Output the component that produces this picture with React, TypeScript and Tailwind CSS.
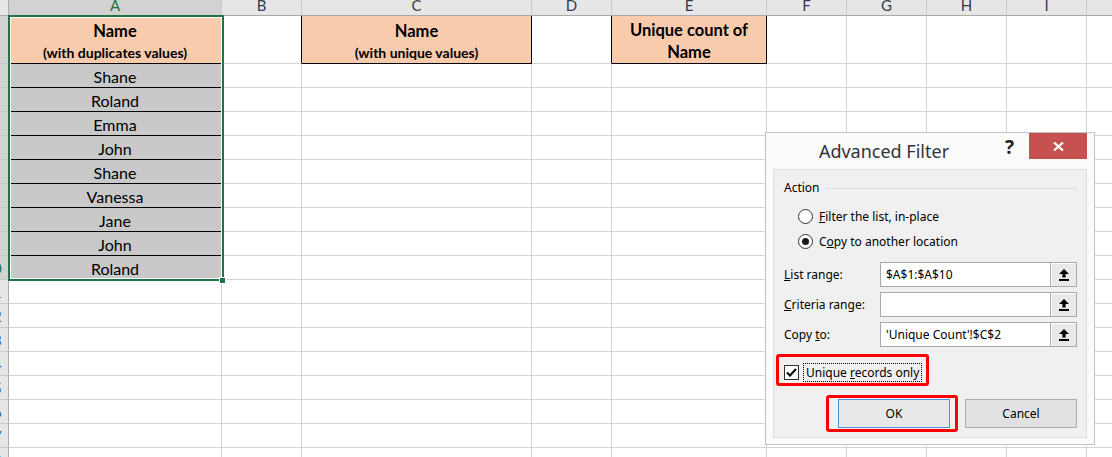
import React from "react";

const COLS = ["A", "B", "C", "D", "E", "F", "G", "H", "I", "J"];
const NAMES = ["Shane", "Roland", "Emma", "John", "Shane", "Vanessa", "Jane", "John", "Roland"];
const ROWS = Array.from({ length: 18 }, (_, i) => i + 1);

function UpArrow() {
  return (
    <svg width="10" height="12" viewBox="0 0 10 12">
      <path d="M5 0 L10 5 L6.6 5 L6.6 8.6 L3.4 8.6 L3.4 5 L0 5 Z" fill="#000" />
      <rect x="0" y="10" width="10" height="2" fill="#000" />
    </svg>
  );
}

function RangeInput({ value }: { value: string }) {
  return (
    <div className="flex h-[25px] w-[197px] border border-[#a9a9a9] bg-white">
      <div className="flex flex-1 items-center pl-[5px] text-[12px] text-black">{value}</div>
      <div className="flex w-[26px] items-center justify-center border-l border-[#a9a9a9] bg-[#e9e9e9] shadow-[inset_1px_1px_0_#ffffff]">
        <UpArrow />
      </div>
    </div>
  );
}

function Radio({ checked }: { checked?: boolean }) {
  return (
    <div className="flex h-[15px] w-[15px] items-center justify-center rounded-full border border-[#333333] bg-white">
      {checked && <div className="h-[7px] w-[7px] rounded-full bg-[#1a1a1a]" />}
    </div>
  );
}

function Dialog() {
  return (
    <div className="absolute left-[765px] top-[132px] flex h-[313px] w-[330px] flex-col border border-[#c2c2c2] bg-[#fbfbfb] px-[7px] pb-[6px] font-['Noto_Sans',sans-serif] text-black">
      <div className="flex h-[36px] shrink-0">
        <div className="flex flex-1 items-center justify-center text-[18px] text-[#333333]">Advanced Filter</div>
        <div className="flex w-[92px] items-start">
          <span className="ml-[10px] mt-[4px] w-[14px] text-[19px] font-bold leading-[20px] text-[#222222]">?</span>
          <div className="ml-[10px] flex h-[26px] w-[58px] items-center justify-center bg-[#c75050]">
            <svg width="11" height="9" viewBox="0 0 11 9">
              <path d="M1 0.5 L10 8.5 M10 0.5 L1 8.5" stroke="#ffffff" strokeWidth="2.2" />
            </svg>
          </div>
        </div>
      </div>
      <div className="flex flex-1 flex-col border border-[#dcdcdc] bg-[#f0f0f0] pl-[10px] pr-[9px] text-[12px]">
        <div className="mt-[6px] flex h-[24px] items-center">
          <span>Action</span>
          <div className="ml-[6px] h-px flex-1 bg-[#dcdcdc]" />
        </div>
        <div className="mt-[4px] flex h-[25px] items-center pl-[14px]">
          <Radio />
          <span className="ml-[6px]">
            <span className="underline">F</span>ilter the list, in-place
          </span>
        </div>
        <div className="flex h-[25px] items-center pl-[14px]">
          <Radio checked />
          <span className="ml-[6px]">
            C<span className="underline">o</span>py to another location
          </span>
        </div>
        <div className="mt-[8px] flex h-[25px] items-center">
          <span className="w-[96px]">
            <span className="underline">L</span>ist range:
          </span>
          <RangeInput value="$A$1:$A$10" />
        </div>
        <div className="mt-[5px] flex h-[25px] items-center">
          <span className="w-[96px]">
            <span className="underline">C</span>riteria range:
          </span>
          <RangeInput value="" />
        </div>
        <div className="mt-[5px] flex h-[25px] items-center">
          <span className="w-[96px]">
            Copy <span className="underline">t</span>o:
          </span>
          <RangeInput value="'Unique Count'!$C$2" />
        </div>
        <div className="relative mt-[16px] flex h-[19px] w-fit items-center">
          <div className="flex h-[15px] w-[15px] items-center justify-center border border-[#333333] bg-white">
            <svg width="11" height="9" viewBox="0 0 11 9">
              <path d="M1 4.5 L4 7.5 L10 1" stroke="#111111" strokeWidth="2.2" fill="none" />
            </svg>
          </div>
          <div className="ml-[4px] flex h-[19px] items-center border border-dotted border-black px-[2px]">
            <span>
              Unique <span className="underline">r</span>ecords only
            </span>
          </div>
          <div className="absolute -bottom-[4px] -left-[8px] -right-[7px] -top-[9px] rounded-[3px] border-[3px] border-[#ff0000]" />
        </div>
        <div className="mt-[17px] flex justify-end gap-[15px]">
          <div className="relative flex h-[29px] w-[112px] items-center justify-center border border-[#4a90d9] bg-[#e8e8e8]">
            OK
            <div className="absolute -bottom-[5px] -left-[13px] -right-[9px] -top-[5px] rounded-[3px] border-[3px] border-[#ff0000]" />
          </div>
          <div className="flex h-[29px] w-[112px] items-center justify-center border border-[#adadad] bg-[#e1e1e1]">
            Cancel
          </div>
        </div>
      </div>
    </div>
  );
}

function Cell({ r, c }: { r: number; c: number }) {
  const base = "flex items-center justify-center border-b border-r pt-[3px] text-[16px] text-black";
  if (c === 0) {
    if (r === 1) {
      return (
        <div className="flex flex-col items-center border-b border-r border-b-black border-r-[#d4d4d4] bg-[#f8cbad] pt-[4px] font-bold leading-[22px] text-black">
          <span className="text-[16.5px]">Name</span>
          <span className="text-[14px]">(with duplicates values)</span>
        </div>
      );
    }
    if (r <= 10) {
      return (
        <div className={`${base} bg-[#c9c9c9] ${r < 10 ? "border-b-black" : "border-b-[#d4d4d4]"} border-r-[#d4d4d4]`}>
          {NAMES[r - 2]}
        </div>
      );
    }
  }
  if (r === 1 && (c === 1 || c === 3)) {
    return <div className="border-b border-r border-b-[#d4d4d4] border-r-black bg-white" />;
  }
  if (r === 1 && c === 2) {
    return (
      <div className="flex flex-col items-center border-b border-r border-black bg-[#f8cbad] pt-[4px] font-bold leading-[22px] text-black">
        <span className="text-[16.5px]">Name</span>
        <span className="text-[14px]">(with unique values)</span>
      </div>
    );
  }
  if (r === 1 && c === 4) {
    return (
      <div className="flex flex-col items-center border-b border-r border-black bg-[#f8cbad] pt-[3px] text-center text-[16.5px] font-bold leading-[22px] text-black">
        <span>Unique count of</span>
        <span>Name</span>
      </div>
    );
  }
  return <div className="border-b border-r border-[#d4d4d4] bg-white" />;
}

export default function App() {
  return (
    <div className="relative h-[457px] w-[1112px] overflow-hidden bg-white font-['Lato',sans-serif]">
      <div className="grid grid-cols-[9px_213px_80px_230px_80px_155px_80px_80px_80px_80px_80px] grid-rows-[16px_48px_repeat(17,24px)]">
        <div className="border-b border-r border-[#ababab] bg-[#e6e6e6]" />
        {COLS.map((c, i) => (
          <div
            key={c}
            className={`flex items-start justify-center overflow-hidden border-b border-r border-b-[#a8a8a8] border-r-[#c9c9c9] text-[15px] leading-[10px] ${
              i === 0 ? "bg-[#d2d2d2] text-[#217346]" : "bg-[#e6e6e6] text-[#333c4e]"
            }`}
          >
            {c}
          </div>
        ))}
        {ROWS.map((r) => (
          <React.Fragment key={r}>
            <div
              className={`flex items-center justify-end overflow-hidden border-b border-r border-b-[#c9c9c9] border-r-[#ababab] ${
                r <= 10 ? "bg-[#d2d2d2] text-[#217346]" : "bg-[#e6e6e6] text-[#2b5ea8]"
              }`}
            >
              <div className="w-[30px] shrink-0 text-center text-[15px] leading-[24px]">{r}</div>
            </div>
            {COLS.map((_, c) => (
              <Cell key={c} r={r} c={c} />
            ))}
          </React.Fragment>
        ))}
      </div>
      <div className="absolute left-[8px] top-[15px] h-[266px] w-[216px] border-2 border-[#217346]">
        <div className="h-full w-full border border-white" />
      </div>
      <div className="absolute left-[219px] top-[277px] h-[7px] w-[7px] border border-white bg-[#217346]" />
      <Dialog />
    </div>
  );
}
